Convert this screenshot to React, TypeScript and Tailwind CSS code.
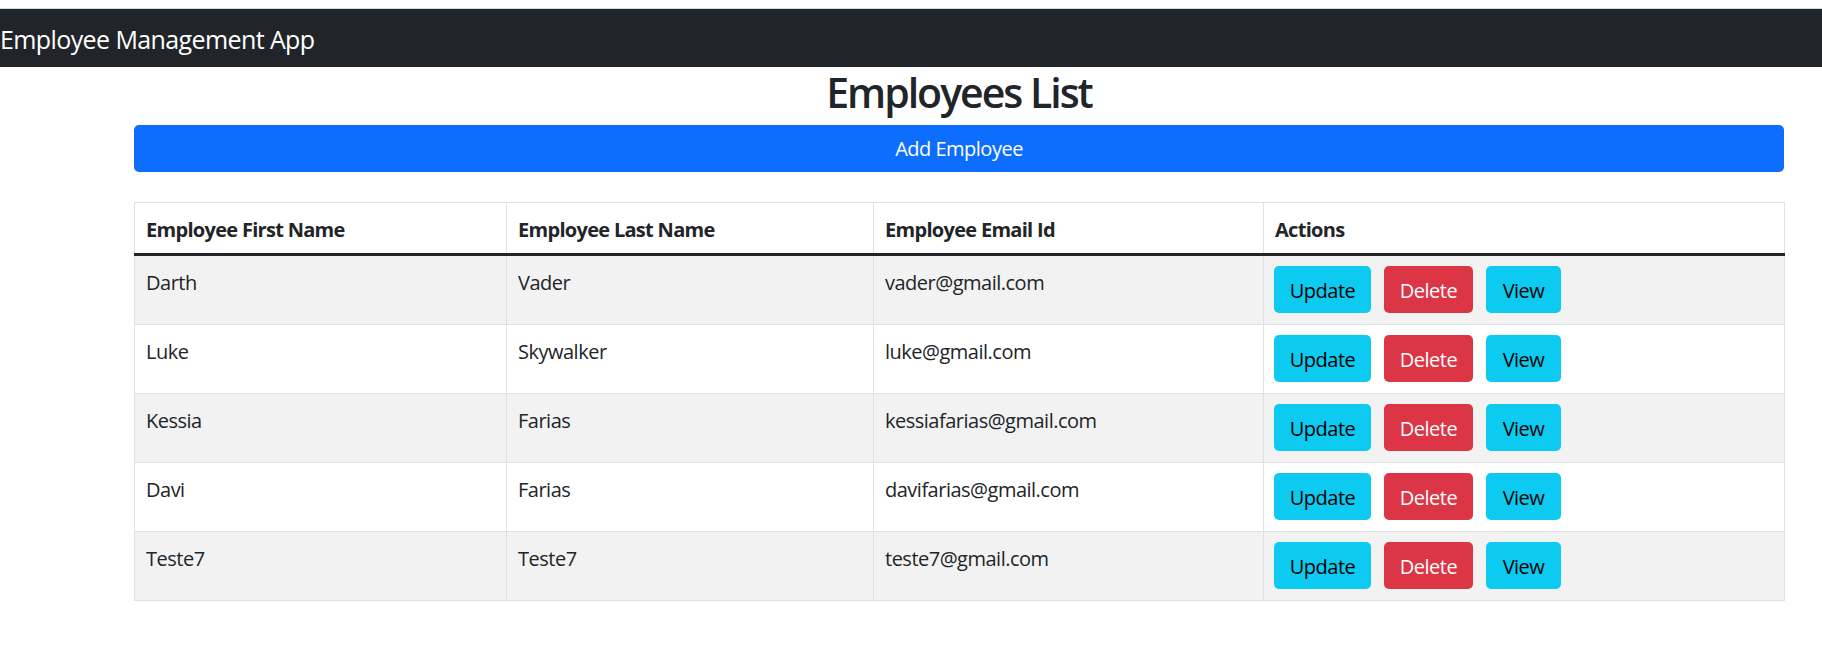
import React from "react";

const rows = [
  { first: "Darth", last: "Vader", email: "vader@gmail.com" },
  { first: "Luke", last: "Skywalker", email: "luke@gmail.com" },
  { first: "Kessia", last: "Farias", email: "kessiafarias@gmail.com" },
  { first: "Davi", last: "Farias", email: "davifarias@gmail.com" },
  { first: "Teste7", last: "Teste7", email: "teste7@gmail.com" },
];

const th =
  "border border-b-[3px] border-[#dee2e6] border-b-[#212529] px-[11px] pt-[12px] pb-[8px] text-left font-bold tracking-[-0.7px]";
const td = "border border-[#dee2e6] px-[11px] pt-[12px] pb-[9px] align-top";

export default function App() {
  return (
    <div
      className="min-h-[669px] w-full bg-white text-[#212529] tracking-[-0.5px]"
      style={{ fontFamily: '"Open Sans", "Noto Sans", sans-serif' }}
    >
      <div className="h-[9px] border-b border-[#d9d9d9]" />
      <nav className="flex h-[58px] items-center bg-[#212529]">
        <span className="pt-[2px] text-[25px] leading-[37px] tracking-[-0.6px] text-white">
          Employee Management App
        </span>
      </nav>
      <div className="ml-[134px] w-[1650px]">
        <h1 className="mb-[8px] h-[50px] text-center text-[41px] font-semibold leading-[50px] tracking-[-2px]">
          Employees List
        </h1>
        <button className="block h-[47px] w-full rounded-[5px] bg-[#0d6efd] pt-[1px] text-[20px] leading-[30px] text-white">
          Add Employee
        </button>
        <table className="mt-[30px] w-[1650px] table-fixed border-collapse border border-[#dee2e6] text-[20px] leading-[30px]">
          <colgroup>
            <col className="w-[372px]" />
            <col className="w-[367px]" />
            <col className="w-[390px]" />
            <col className="w-[521px]" />
          </colgroup>
          <thead>
            <tr>
              <th className={th}>Employee First Name</th>
              <th className={th}>Employee Last Name</th>
              <th className={th}>Employee Email Id</th>
              <th className={th}>Actions</th>
            </tr>
          </thead>
          <tbody>
            {rows.map((r, i) => (
              <tr key={i} className={i % 2 === 0 ? "bg-[#f2f2f2]" : "bg-white"}>
                <td className={td}>{r.first}</td>
                <td className={td}>{r.last}</td>
                <td className={td}>{r.email}</td>
                <td className="border border-[#dee2e6] px-[10px] pt-[10px] pb-[11px] align-top">
                  <div className="flex gap-[13px]">
                    <button className="h-[47px] w-[97px] rounded-[5px] bg-[#0dcaf0] pt-[2px] text-black">
                      Update
                    </button>
                    <button className="h-[47px] w-[89px] rounded-[5px] bg-[#dc3545] pt-[2px] text-white">
                      Delete
                    </button>
                    <button className="h-[47px] w-[75px] rounded-[5px] bg-[#0dcaf0] pt-[2px] text-black">
                      View
                    </button>
                  </div>
                </td>
              </tr>
            ))}
          </tbody>
        </table>
      </div>
    </div>
  );
}
